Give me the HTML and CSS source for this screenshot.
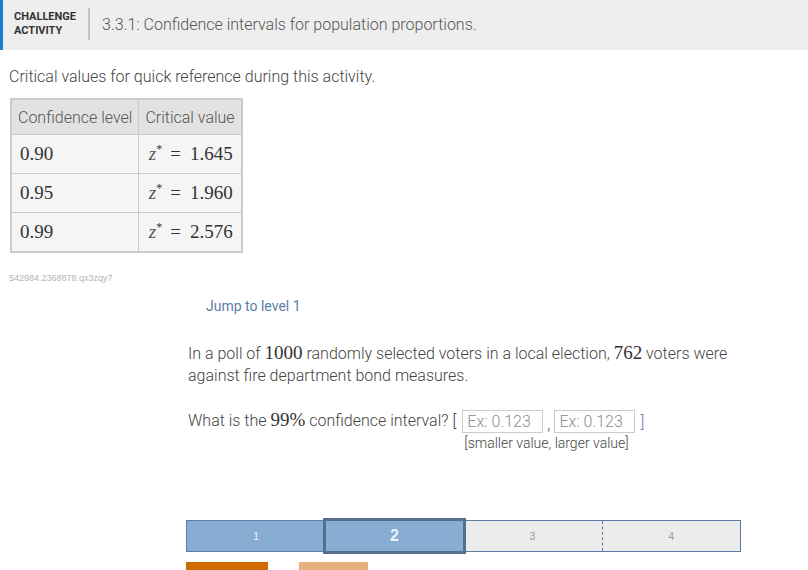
FILE: index.html
```html
<!DOCTYPE html>
<html lang="en">
<head>
    <meta charset="UTF-8">
    <title>Challenge activity 3.3.1</title>
    <link rel="stylesheet" href="styles.css">
</head>
<body>
    <div class="header">
        <div class="header-label">CHALLENGE<br>ACTIVITY</div>
        <div class="header-title">3.3.1: Confidence intervals for population proportions.</div>
    </div>

    <div class="content">
        <p class="intro">Critical values for quick reference during this activity.</p>
        <table class="ref-table">
            <tr>
                <th>Confidence level</th>
                <th>Critical value</th>
            </tr>
            <tr>
                <td class="math">0.90</td>
                <td class="math right"><i>z</i><sup>*</sup><span class="eq">=</span>1.645</td>
            </tr>
            <tr>
                <td class="math">0.95</td>
                <td class="math right"><i>z</i><sup>*</sup><span class="eq">=</span>1.960</td>
            </tr>
            <tr>
                <td class="math">0.99</td>
                <td class="math right"><i>z</i><sup>*</sup><span class="eq">=</span>2.576</td>
            </tr>
        </table>
        <div class="activity-id">542984.2368878.qx3zqy7</div>

        <div class="activity">
            <button class="jump">Jump to level 1</button>
            <p class="prompt">In a poll of <span class="num">1000</span> randomly selected voters in a local election, <span class="num">762</span> voters were against fire department bond measures.</p>
            <div class="question">
                <span>What is the <span class="num">99%</span> confidence interval? [</span>
                <div class="answer">
                    <div class="inputs">
                        <input type="text" placeholder="Ex: 0.123">
                        <span class="comma">,</span>
                        <input type="text" placeholder="Ex: 0.123">
                        <span class="bracket">]</span>
                    </div>
                    <div class="hint">[smaller value, larger value]</div>
                </div>
            </div>

            <div class="levels">
                <div class="level done">1</div>
                <div class="level done current">2</div>
                <div class="level">3</div>
                <div class="level dashed">4</div>
            </div>
            <div class="buttons">
                <div class="btn-check"></div>
                <div class="btn-next"></div>
            </div>
        </div>
    </div>
</body>
</html>
```

FILE: styles.css
```css
body {
    margin: 0;
    font-family: Roboto, 'Liberation Sans', sans-serif;
    font-weight: 300;
    color: #333;
    background-color: white;
    overflow: hidden;
}

.header {
    display: flex;
    align-items: center;
    height: 50px;
    background-color: #eee;
    border-left: 3px solid #1a7fd1;
    padding-left: 11px;
}

.header-label {
    font-size: 11px;
    font-weight: 700;
    line-height: 14px;
    color: #333;
    padding-right: 12px;
    border-right: 2px solid #c4c4c4;
    height: 32px;
    display: flex;
    align-items: center;
    margin-top: -2px;
}

.header-title {
    font-size: 16px;
    color: #555;
    padding-left: 12px;
    margin-top: -2px;
}

.content {
    padding: 0 9px;
}

.intro {
    font-size: 16px;
    margin: 17px 0 12px;
    color: #444;
}

.ref-table {
    border-collapse: collapse;
    border: 2px solid #cbcbcb;
    margin-left: 1px;
}

.ref-table th {
    background-color: #e2e2e2;
    font-weight: 300;
    font-size: 16px;
    color: #555;
    height: 34px;
    padding: 0 6px;
    text-align: left;
    border: 1px solid #cbcbcb;
}

.ref-table td {
    background-color: #f5f5f5;
    border: 1px solid #cbcbcb;
    height: 38px;
    padding: 0 8px;
}

.math {
    font-family: 'Liberation Serif', 'DejaVu Serif', serif;
    font-size: 19px;
    color: #333;
}

.right {
    text-align: right;
}

.math i {
    color: #555;
}

.math sup {
    font-size: 12px;
    line-height: 0;
}

.eq {
    margin: 0 9px 0 8px;
}

.activity-id {
    font-size: 9px;
    color: #b5b5b5;
    font-family: 'Liberation Sans', sans-serif;
    margin-top: 20px;
}

.activity {
    margin-left: 177px;
    width: 555px;
}

.jump {
    background: none;
    border: none;
    font-family: Roboto, sans-serif;
    font-size: 14px;
    font-weight: 400;
    color: #5b7da6;
    padding: 0;
    margin: 15px 0 0 20px;
    cursor: pointer;
}

.prompt {
    font-size: 16px;
    line-height: 22px;
    margin: 28px 0 0 2px;
    color: #444;
}

.num {
    font-family: 'Liberation Serif', 'DejaVu Serif', serif;
    font-size: 19px;
    line-height: 1;
    font-weight: 400;
    color: #333;
}

.question {
    display: flex;
    align-items: flex-start;
    font-size: 16px;
    color: #444;
    margin: 22px 0 0 2px;
}

.question > span {
    line-height: 24px;
    margin-right: 6px;
}

.inputs {
    display: flex;
    align-items: center;
}

.inputs input {
    width: 71px;
    height: 21px;
    border: 1px solid #ccc;
    padding: 0 4px;
    font-family: Roboto, sans-serif;
    font-weight: 300;
    font-size: 16px;
    color: #444;
    outline: none;
}

.inputs input::placeholder {
    color: #8c8c8c;
}

.comma {
    margin: 6px 4px 0;
}

.bracket {
    color: #5b7da6;
    margin-left: 5px;
}

.hint {
    font-size: 14px;
    margin: 1px 0 0 2px;
    color: #444;
}

.levels {
    display: grid;
    grid-template-columns: repeat(4, 1fr);
    margin-top: 69px;
    border: 1px solid #5b7da6;
    height: 30px;
}

.level {
    display: flex;
    align-items: center;
    justify-content: center;
    font-family: 'Liberation Sans', sans-serif;
    font-size: 10px;
    color: #999;
    background-color: #ececec;
}

.level.done {
    background-color: #88add3;
    color: #eef3f8;
}

.level.current {
    font-size: 16px;
    font-weight: 700;
    outline: 3px solid #566d8e;
    outline-offset: -1px;
    position: relative;
    z-index: 1;
    margin: -1px 0;
}

.level.dashed {
    border-left: 1px dashed #5b7da6;
}

.buttons {
    display: flex;
    gap: 31px;
    margin-top: 10px;
}

.btn-check {
    width: 82px;
    height: 10px;
    background-color: #cf6a00;
}

.btn-next {
    width: 69px;
    height: 10px;
    background-color: #e6b17d;
}
```
